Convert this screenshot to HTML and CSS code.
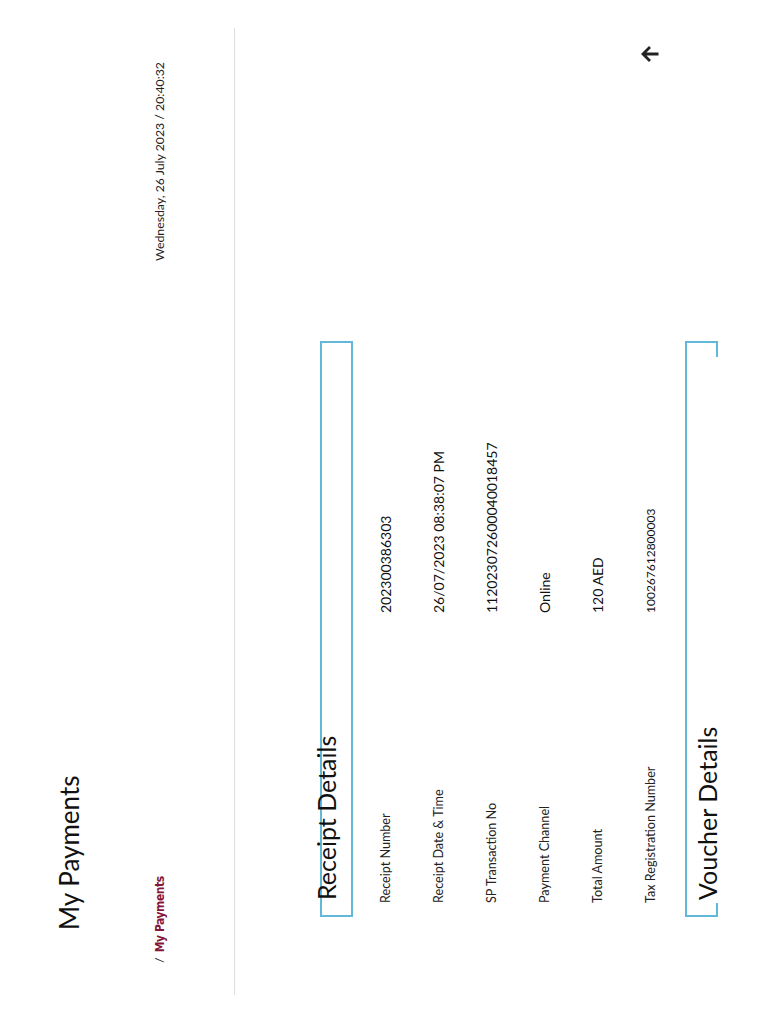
FILE: index.html
```html
<!DOCTYPE html>
<html lang="en">
<head>
<meta charset="utf-8">
<title>My Payments</title>
<link rel="stylesheet" href="styles.css">
</head>
<body>
<div class="screen">
<div class="page">
  <h1 class="title">My Payments</h1>
  <div class="crumbs">
    <div class="crumb"><span class="sep">/ </span><span class="crumb-link">My Payments</span></div>
    <div class="date">Wednesday, 26 July 2023 / 20:40:32</div>
  </div>
  <div class="rule"></div>
  <div class="section">
    <div class="box-head">
      <h2 class="head-text">Receipt Details</h2>
    </div>
    <div class="details">
      <div class="label">Receipt Number</div><div class="value">202300386303</div>
      <div class="label">Receipt Date &amp; Time</div><div class="value">26/07/2023 08:38:07 PM</div>
      <div class="label">SP Transaction No</div><div class="value">112023072600040018457</div>
      <div class="label">Payment Channel</div><div class="value">Online</div>
      <div class="label">Total Amount</div><div class="value">120 AED</div>
      <div class="label">Tax Registration Number</div><div class="value value-small">100267612800003</div>
    </div>
    <div class="box-head voucher">
      <h2 class="head-text voucher-text">Voucher Details</h2>
    </div>
  </div>
  <button class="to-top" aria-label="Scroll to top">
    <svg width="24" height="24" viewBox="0 0 24 24"><path d="M12 20.5V6 M5 12 L12 5 L19 12" fill="none" stroke="#222" stroke-width="2.8"/></svg>
  </button>
</div>
</div>
</body>
</html>
```
FILE: styles.css
```css
html, body {
  margin: 0;
  padding: 0;
  background: #fff;
}
.screen {
  position: relative;
  width: 768px;
  height: 1024px;
  overflow: hidden;
}
.page {
  position: relative;
  width: 1024px;
  height: 768px;
  transform-origin: 0 0;
  transform: translateY(1024px) rotate(-90deg);
  background: #fff;
  font-family: Lato, "Open Sans", sans-serif;
  color: #222;
}
.title {
  margin: 0;
  padding: 56px 0 0 94px;
  font-size: 26px;
  line-height: 26px;
  font-weight: 400;
  color: #111;
}
.crumbs {
  display: flex;
  justify-content: space-between;
  align-items: baseline;
  margin-top: 72px;
  padding: 0 62px 0 61px;
  font-size: 12.3px;
  line-height: 12px;
}
.sep {
  color: #333;
  margin-right: 2px;
}
.crumb-link {
  font-family: "DejaVu Sans Condensed", "DejaVu Sans", sans-serif;
  font-size: 12px;
  color: #861637;
  font-weight: 700;
  letter-spacing: -0.45px;
}
.date {
  color: #222;
}
.rule {
  height: 1px;
  background: #dedede;
  margin: 68px 28px 0 29px;
}
.section {
  margin-left: 107px;
  width: 576px;
}
.box-head {
  position: relative;
  box-sizing: border-box;
  height: 33px;
  margin-top: 85px;
  border: 2px solid #62b8d8;
  padding-left: 15px;
}
.head-text {
  margin: -9px 0 0;
  font-size: 25px;
  line-height: 26px;
  font-weight: 400;
  color: #111;
}
.details {
  display: grid;
  grid-template-columns: 290px 1fr;
  grid-auto-rows: 20px;
  row-gap: 33px;
  margin-top: 23px;
  padding-left: 14px;
  line-height: 20px;
}
.label {
  font-size: 12.6px;
  color: #222;
}
.value {
  font-size: 14px;
  color: #111;
}
.value-small {
  font-size: 12px;
}
.voucher {
  margin-top: 24px;
  border-bottom-color: transparent;
}
.voucher::before,
.voucher::after {
  content: "";
  position: absolute;
  bottom: -2px;
  height: 2px;
  background: #62b8d8;
}
.voucher::before {
  left: -2px;
  width: 14px;
}
.voucher::after {
  right: -2px;
  width: 16px;
}
.voucher-text {
  margin-top: 7px;
}
.to-top {
  position: absolute;
  left: 958px;
  top: 638px;
  width: 24px;
  height: 24px;
  padding: 0;
  border: 0;
  background: transparent;
}
.to-top svg {
  display: block;
}
```
